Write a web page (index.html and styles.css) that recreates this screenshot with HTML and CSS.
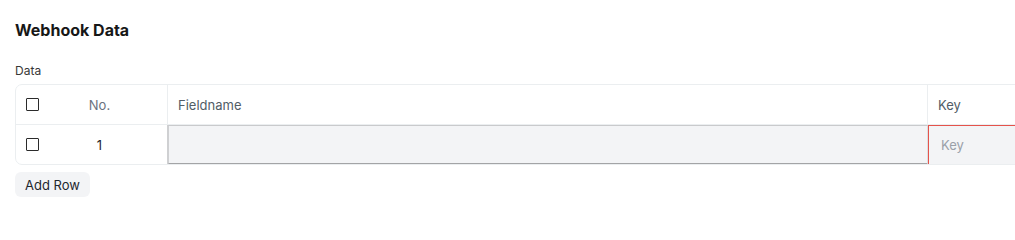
FILE: index.html
```html
<!DOCTYPE html>
<html>
<head>
<meta charset="utf-8">
<link rel="stylesheet" href="styles.css">
</head>
<body>
<div class="page">
  <h2 class="title">Webhook Data</h2>
  <div class="label">Data</div>
  <div class="grid-wrap">
    <div class="grid">
      <div class="grid-row head">
        <div class="cell idx"><span class="check"></span><span class="num">No.</span></div>
        <div class="cell field">Fieldname</div>
        <div class="cell key">Key</div>
      </div>
      <div class="grid-row body">
        <div class="cell idx"><span class="check"></span><span class="num num-dark">1</span></div>
        <div class="cell field"><div class="input field-input"></div></div>
        <div class="cell key"><div class="input key-input">Key</div></div>
      </div>
    </div>
  </div>
  <button class="add-row">Add Row</button>
</div>
</body>
</html>
```

FILE: styles.css
```css
html, body {
  margin: 0;
  padding: 0;
  background: #ffffff;
  overflow: hidden;
}
body {
  font-family: Inter, "Noto Sans", sans-serif;
  color: #1f272e;
}
.page {
  padding: 20px 0 0 15px;
}
.title {
  margin: 0;
  font-size: 16px;
  font-weight: 700;
  line-height: 20px;
  color: #171717;
}
.label {
  margin-top: 23px;
  font-size: 12px;
  line-height: 16px;
  color: #383838;
}
.grid-wrap {
  margin-top: 5px;
  overflow: hidden;
}
.grid {
  width: 1100px;
  border: 1px solid #ebeef0;
  border-radius: 7px;
  overflow: hidden;
}
.grid-row {
  display: flex;
  height: 39px;
}
.grid-row.head {
  border-bottom: 1px solid #ebeef0;
}
.cell {
  display: flex;
  align-items: center;
  font-size: 13px;
  box-sizing: border-box;
}
.idx {
  width: 152px;
  padding-left: 10px;
  border-right: 1px solid #ebeef0;
}
.check {
  width: 11px;
  height: 11px;
  border: 1px solid #2b2b2b;
  border-radius: 1px;
  flex: none;
}
.num {
  flex: 1;
  text-align: center;
  padding-right: 7px;
  color: #6b7280;
}
.num-dark {
  color: #1f272e;
}
.field {
  width: 760px;
  padding-left: 10px;
  color: #525d66;
  border-right: 1px solid #ebeef0;
}
.key {
  flex: 1;
  padding-left: 10px;
  color: #525d66;
}
.body .field, .body .key {
  padding: 0;
  align-items: stretch;
}
.body .field {
  border-right: none;
}
.input {
  flex: 1;
  box-sizing: border-box;
  background: #f3f4f6;
  font-size: 13px;
  display: flex;
  align-items: center;
}
.field-input {
  margin-left: -1px;
  border-top: 1px solid #c9cacc;
  border-left: 2px solid #cfd0d2;
  border-right: 1px solid #dcdde0;
  border-bottom: 2px solid #a3a4a6;
  margin-bottom: -1px;
}
.key-input {
  border: 1px solid #e5534b;
  padding-left: 12px;
  color: #9aa0a8;
  margin-bottom: -1px;
}
.add-row {
  margin-top: 7px;
  font-family: Inter, "Noto Sans", sans-serif;
  font-size: 13px;
  line-height: 16px;
  color: #1f272e;
  background: #f3f4f6;
  border: none;
  border-radius: 6px;
  padding: 4px 10px;
  height: 25px;
}
```
